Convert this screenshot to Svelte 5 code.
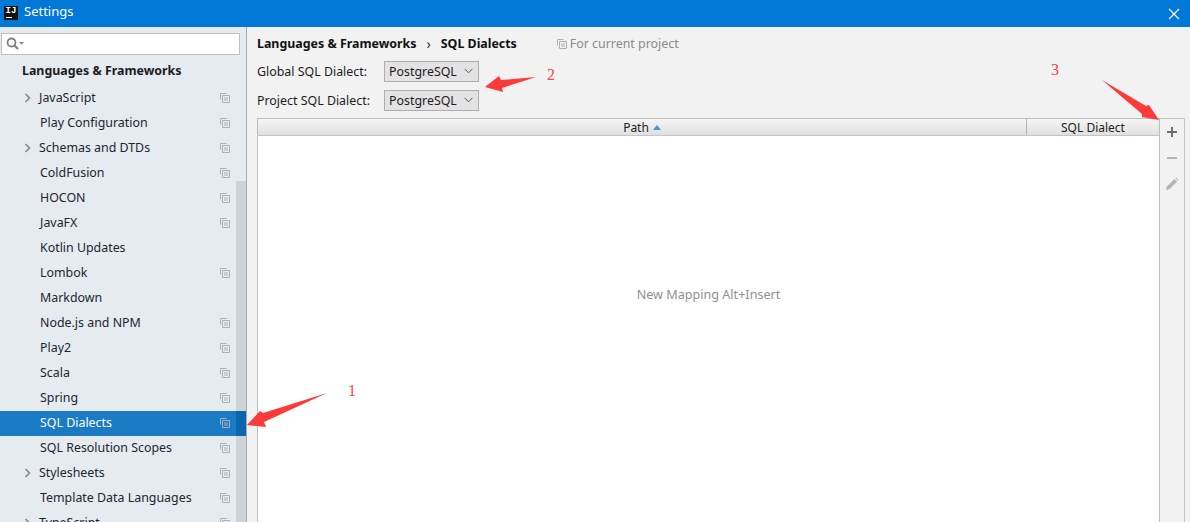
<script>
  const rows = [
    { name: 'JavaScript', arrow: true, copy: true },
    { name: 'Play Configuration', copy: true },
    { name: 'Schemas and DTDs', arrow: true, copy: true },
    { name: 'ColdFusion', copy: true },
    { name: 'HOCON', copy: true },
    { name: 'JavaFX', copy: true },
    { name: 'Kotlin Updates' },
    { name: 'Lombok', copy: true },
    { name: 'Markdown' },
    { name: 'Node.js and NPM', copy: true },
    { name: 'Play2', copy: true },
    { name: 'Scala', copy: true },
    { name: 'Spring', copy: true },
    { name: 'SQL Dialects', copy: true, selected: true },
    { name: 'SQL Resolution Scopes', copy: true },
    { name: 'Stylesheets', arrow: true, copy: true },
    { name: 'Template Data Languages', copy: true },
    { name: 'TypeScript', arrow: true, copy: true }
  ];
  const dialects = [
    { label: 'Global SQL Dialect:', value: 'PostgreSQL' },
    { label: 'Project SQL Dialect:', value: 'PostgreSQL' }
  ];
</script>

{#snippet copyIcon()}
  <svg class="copy" width="10" height="10" viewBox="0 0 10 10" fill="none" stroke="currentColor">
    <path d="M.5 6.500V.5h6" />
    <path d="M2.500 2.500h7v7h-7zM4 5h4M4 7h4" />
  </svg>
{/snippet}

<div class="window">
  <header class="titlebar">
    <div class="logo"><span>IJ</span><i></i></div>
    <span class="title">Settings</span>
    <svg class="close" width="12" height="12" viewBox="0 0 12 12" stroke="#fff" stroke-width="1.100">
      <path d="M1 1l10 10M11 1L1 11" />
    </svg>
  </header>

  <div class="body">
    <aside class="sidebar">
      <div class="search">
        <svg width="19" height="14" viewBox="0 0 19 14" fill="none">
          <circle cx="5.500" cy="5.500" r="4" stroke="#808080" stroke-width="1.800" />
          <path d="M8.500 8.500l3.500 3.500" stroke="#808080" stroke-width="2.200" />
          <path d="M13 5h5l-2.500 3z" fill="#8c8c8c" />
        </svg>
      </div>
      <div class="group">Languages &amp; Frameworks</div>
      <ul class="tree">
        {#each rows as row}
          <li class="row" class:selected={row.selected}>
            {#if row.arrow}
              <svg class="chevron" width="8" height="10" viewBox="0 0 8 10" fill="none" stroke="#8a8a8a" stroke-width="1.700">
                <path d="M1.500 1l4 4-4 4" />
              </svg>
            {/if}
            <span class="name" class:shift={row.arrow}>{row.name}</span>
            {#if row.copy}{@render copyIcon()}{/if}
          </li>
        {/each}
      </ul>
      <div class="scrollbar"></div>
    </aside>

    <main class="content">
      <div class="crumbs">
        <b>Languages &amp; Frameworks</b>
        <span class="sep">›</span>
        <b>SQL Dialects</b>
        <span class="scope">{@render copyIcon()} For current project</span>
      </div>

      <div class="forms">
        {#each dialects as d}
          <div class="field">
            <span class="label">{d.label}</span>
            <div class="combo">
              <span>{d.value}</span>
              <svg width="9" height="6" viewBox="0 0 9 6" fill="none" stroke="#555">
                <path d="M.5.800l4 4 4-4" />
              </svg>
            </div>
          </div>
        {/each}
      </div>

      <div class="table-wrap">
        <div class="table">
          <div class="thead">
            <div class="th path">Path <span class="sort"></span></div>
            <div class="th dialect">SQL Dialect</div>
          </div>
          <div class="tbody">New Mapping Alt+Insert</div>
        </div>
        <div class="tools">
          <svg width="12" height="12" viewBox="0 0 12 12" stroke="#6e6e6e" stroke-width="2">
            <path d="M6 1v10M1 6h10" />
          </svg>
          <svg width="12" height="12" viewBox="0 0 12 12" stroke="#b4b4b4" stroke-width="2">
            <path d="M1 6h10" />
          </svg>
          <svg class="pencil" width="14" height="14" viewBox="0 0 14 14" fill="#b4b4b4">
            <path d="M1 13l.8-3.400 7.700-7.700 2.600 2.600-7.700 7.700zM10.300 1.100l.8-.6 2.400 2.400-.6.800z" />
          </svg>
        </div>
      </div>
    </main>
  </div>

  <svg class="marks" width="1190" height="522" viewBox="0 0 1190 522" fill="#fb3a3a">
    <path d="M327 393L263 413 260 411 247 425 266 427 264 422z" />
    <path d="M536 77L501 80 499 76 485 87 503 92 502 88z" />
    <path d="M1102 80L1146 106 1149 105 1159 120 1142 117 1142 114z" />
  </svg>
  <span class="note n1">1</span>
  <span class="note n2">2</span>
  <span class="note n3">3</span>
</div>

<style>
  :global(body) {
    margin: 0;
    overflow: hidden;
  }

  .window {
    position: relative;
    width: 1190px;
    height: 522px;
    overflow: hidden;
    font-family: "Noto Sans", "Open Sans", sans-serif;
    font-size: 12.4px;
    color: #1c1c1c;
    background: #f2f2f2;
  }

  .titlebar {
    display: flex;
    align-items: center;
    height: 27px;
    padding: 0 10px 0 4px;
    background: #0078d7;
    color: #fff;
  }

  .logo {
    position: relative;
    width: 14px;
    height: 14px;
    margin: -1px 6px 0 0;
    background: #111;
    color: #fff;
    font: bold 9px/10px "Liberation Mono", monospace;
    text-align: center;
  }

  .logo i {
    position: absolute;
    left: 2px;
    bottom: 2px;
    width: 6px;
    height: 1px;
    background: #fff;
  }

  .title {
    flex: 1;
    padding-bottom: 5px;
    font-size: 13px;
  }

  .body {
    display: flex;
    height: 495px;
  }

  .sidebar {
    position: relative;
    flex: none;
    width: 246px;
    height: 100%;
    overflow: hidden;
    background: #e6ebf0;
    border-right: 1px solid #a9a9a9;
  }

  .search {
    display: flex;
    align-items: center;
    box-sizing: border-box;
    width: 239px;
    height: 22px;
    margin: 6px 0 0 1px;
    padding-left: 4px;
    background: #fff;
    border: 1px solid #bfbfbf;
  }

  .group {
    height: 30px;
    margin-bottom: 1px;
    padding-left: 22px;
    line-height: 32px;
    font-weight: 700;
    color: #1c1c1c;
  }

  .tree {
    margin: 0;
    padding: 0;
    list-style: none;
  }

  .row {
    position: relative;
    z-index: 1;
    display: flex;
    align-items: center;
    box-sizing: border-box;
    height: 25px;
    padding: 0 0 3px 40px;
    color: #1c2530;
  }

  .row.selected {
    background: #1a7bc4;
    color: #fff;
  }

  .row.selected::after {
    content: "";
    position: absolute;
    right: 0;
    top: 0;
    bottom: 0;
    width: 10px;
    background: #0a67ae;
  }

  .chevron {
    position: absolute;
    left: 24px;
    top: 7px;
  }

  .name.shift {
    margin-left: -1px;
  }

  .copy {
    flex: none;
    color: #a8b1b8;
  }

  .row .copy {
    position: absolute;
    z-index: 1;
    left: 220px;
    top: 7px;
  }

  .scrollbar {
    position: absolute;
    right: 0;
    top: 154px;
    bottom: 0;
    width: 10px;
    background: #cdd3d8;
  }

  .content {
    flex: 1;
    min-width: 0;
    display: flex;
    flex-direction: column;
    padding: 0 5px 0 10px;
  }

  .crumbs {
    display: flex;
    align-items: center;
    height: 33px;
    box-sizing: border-box;
    color: #111;
  }

  .sep {
    margin: 0 10px;
    font-size: 14px;
    color: #333;
  }

  .scope {
    display: flex;
    align-items: center;
    gap: 3px;
    margin-left: 40px;
    color: #8a8a8a;
  }

  .forms {
    display: flex;
    flex-direction: column;
    gap: 8px;
    margin-top: 1px;
  }

  .field {
    display: flex;
    align-items: center;
    height: 21px;
  }

  .label {
    width: 127px;
  }

  .combo {
    display: flex;
    align-items: center;
    justify-content: space-between;
    box-sizing: border-box;
    width: 95px;
    height: 21px;
    padding: 0 5px 1px 4px;
    background: #e3e3e3;
    border: 1px solid #adadad;
  }

  .table-wrap {
    flex: 1;
    display: flex;
    margin-top: 7px;
    min-height: 0;
  }

  .table {
    flex: 1;
    display: flex;
    flex-direction: column;
    background: #fff;
    border: 1px solid #bdbdbd;
    border-bottom: none;
  }

  .thead {
    display: flex;
    height: 16px;
    background: linear-gradient(#f5f5f5, #e0e0e0);
    border-bottom: 1px solid #c4c4c4;
  }

  .th {
    display: flex;
    align-items: center;
    justify-content: center;
    gap: 4px;
    font-size: 12px;
  }

  .path {
    flex: 1;
    border-right: 1px solid #b5b5b5;
  }

  .dialect {
    width: 132px;
    box-sizing: border-box;
  }

  .sort {
    width: 0;
    height: 0;
    border: 4px solid transparent;
    border-top: none;
    border-bottom: 5px solid #4a94c8;
  }

  .tbody {
    flex: 1;
    display: flex;
    align-items: center;
    justify-content: center;
    padding-bottom: 70px;
    font-size: 12.6px;
    color: #8f8f8f;
  }

  .tools {
    flex: none;
    display: flex;
    flex-direction: column;
    align-items: center;
    gap: 14px;
    width: 25px;
    padding-top: 7px;
    box-sizing: border-box;
    border: 1px solid #c4c4c4;
    border-left: none;
    border-bottom: none;
  }

  .pencil {
    margin-top: -1px;
  }

  .marks {
    position: absolute;
    left: 0;
    top: 0;
    pointer-events: none;
  }

  .note {
    position: absolute;
    font: 16px "Liberation Serif", serif;
    color: #f94444;
  }

  .n1 { left: 348px; top: 382px; }
  .n2 { left: 547px; top: 66px; }
  .n3 { left: 1051px; top: 61px; }
</style>
